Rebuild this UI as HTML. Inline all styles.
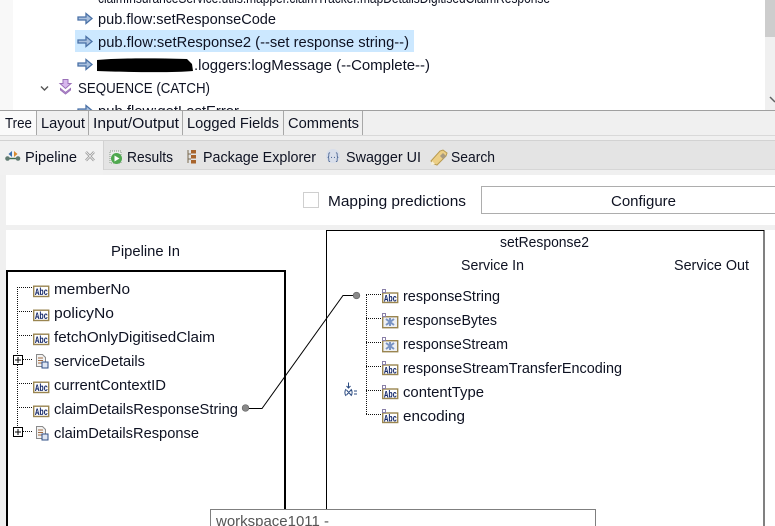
<!DOCTYPE html>
<html><head><meta charset="utf-8"><title>Pipeline</title>
<style>
html,body{margin:0;padding:0;background:#fff;width:775px;height:526px;overflow:hidden}
svg{display:block;position:absolute;left:0;top:0}
text{font-family:"Liberation Sans",sans-serif;font-size:15px;fill:#0e1222}
.a{font-family:"Liberation Mono",monospace;font-size:10.5px;font-weight:bold;fill:#16296a}
.d{stroke:#111;stroke-width:1;stroke-dasharray:1 1;fill:none}
.ab{fill:#fff;stroke:#9a8550;stroke-width:1.4}
.sq{fill:#fff;stroke:#8a80a8;stroke-width:1}
</style></head><body>
<svg width="775" height="526" viewBox="0 0 775 526" xmlns="http://www.w3.org/2000/svg">
<rect width="775" height="526" fill="#fff"/>
<!-- top tree -->
<rect x="0" y="0" width="13" height="110" fill="#f8f8f8"/>
<rect x="75" y="30" width="339" height="22" fill="#cce8ff"/>
<text x="98" y="3" textLength="452" lengthAdjust="spacingAndGlyphs">claimInsuranceService.utils.mapper.claimTracker.mapDetailsDigitisedClaimResponse</text>
<path d="M78 17h8v-3.500l6 5-6 5v-3.500h-8z" fill="#a9c0de" stroke="#4a71a6" stroke-width="1.300"/>
<text x="98" y="24" textLength="178" lengthAdjust="spacingAndGlyphs">pub.flow:setResponseCode</text>
<path d="M78 40h8v-3.500l6 5-6 5v-3.500h-8z" fill="#a9c0de" stroke="#4a71a6" stroke-width="1.300"/>
<text x="98" y="47" textLength="311" lengthAdjust="spacingAndGlyphs">pub.flow:setResponse2 (--set response string--)</text>
<path d="M78 63h8v-3.500l6 5-6 5v-3.500h-8z" fill="#a9c0de" stroke="#4a71a6" stroke-width="1.300"/>
<path d="M97 60c20-2 55-2 90-1l5 5 1 7c-20 2-70 1-96 0z" fill="#000"/>
<text x="194" y="70" textLength="236" lengthAdjust="spacingAndGlyphs">.loggers:logMessage (--Complete--)</text>
<path d="M41 86.500l3.500 3.500 3.500-3.500" fill="none" stroke="#555" stroke-width="1.400"/>
<path d="M63 79.500h5v4h3l-5.500 5-5.500-5h3zM60.500 88.500l5 4 5-4v1.500l-5 4-5-4z" fill="#d8b8ee" stroke="#9a70b8" stroke-width="1"/>
<text x="78" y="93" textLength="132" lengthAdjust="spacingAndGlyphs">SEQUENCE (CATCH)</text>
<path d="M78 109h8v-3.500l6 5-6 5v-3.500h-8z" fill="#a9c0de" stroke="#4a71a6" stroke-width="1.300"/>
<text x="98" y="116" textLength="141" lengthAdjust="spacingAndGlyphs">pub.flow:getLastError</text>
<!-- scrollbar -->
<rect x="765" y="0" width="10" height="110" fill="#f0f0f0"/>
<rect x="765" y="0" width="10" height="37" fill="#cdcdcd"/>
<path d="M770 97l5 5" stroke="#606060" stroke-width="1.500" fill="none"/>
<!-- editor tabs -->
<rect x="0" y="110" width="775" height="25" fill="#f0f0f0"/>
<rect x="0" y="110" width="775" height="1" fill="#a0a0a0"/>
<rect x="0" y="135" width="775" height="1" fill="#d9d9d9"/>
<rect x="0" y="136" width="775" height="4" fill="#f0f0f0"/>
<rect x="0" y="111" width="36" height="24" fill="#fafafa"/>
<rect x="36" y="111" width="1" height="24" fill="#a8a8a8"/>
<rect x="88" y="111" width="1" height="24" fill="#a8a8a8"/>
<rect x="182" y="111" width="1" height="24" fill="#a8a8a8"/>
<rect x="283" y="111" width="1" height="24" fill="#a8a8a8"/>
<rect x="362" y="111" width="1" height="24" fill="#a8a8a8"/>
<text x="5" y="128" textLength="27" lengthAdjust="spacingAndGlyphs">Tree</text>
<text x="41" y="128" textLength="44" lengthAdjust="spacingAndGlyphs">Layout</text>
<text x="93" y="128" textLength="86" lengthAdjust="spacingAndGlyphs">Input/Output</text>
<text x="187" y="128" textLength="92" lengthAdjust="spacingAndGlyphs">Logged Fields</text>
<text x="288" y="128" textLength="71" lengthAdjust="spacingAndGlyphs">Comments</text>
<!-- view tabs -->
<rect x="0" y="140" width="775" height="1" fill="#d2d2d2"/>
<rect x="0" y="141" width="775" height="28" fill="#e4e4e4"/>
<rect x="0" y="169" width="775" height="1" fill="#d6d6d6"/>
<rect x="0" y="170" width="775" height="60" fill="#f0f0f0"/>
<rect x="0" y="230" width="6" height="296" fill="#f0f0f0"/>
<rect x="0" y="141" width="103" height="34" fill="#f1f1f1"/>
<rect x="103" y="141" width="1" height="29" fill="#d2d2d2"/>
<path d="M7 158.500h11" stroke="#3c6a50" stroke-width="1.400" fill="none"/>
<circle cx="7.500" cy="158.500" r="2.300" fill="#607a70"/><circle cx="18" cy="158.500" r="2.300" fill="#607a70"/>
<path d="M12 151l-3.500 3 3.500 3z" fill="#3a70b0"/><path d="M14 151l3.500 3-3.500 3z" fill="#d98a30"/>
<text x="25" y="162" textLength="52" lengthAdjust="spacingAndGlyphs">Pipeline</text>
<path d="M86 152l8 8.500M94 152l-8 8.500" stroke="#999" stroke-width="2.400" fill="none"/>
<path d="M86 152l8 8.500M94 152l-8 8.500" stroke="#f4f4f4" stroke-width="0.900" fill="none"/>
<rect x="110" y="151" width="11" height="12" fill="#eee" stroke="#8a9a8a" stroke-dasharray="1 1"/>
<circle cx="116.500" cy="158.500" r="5.500" fill="#4fa84f"/>
<path d="M114.500 155.500l5 3-5 3z" fill="#fff"/>
<text x="127" y="162" textLength="46" lengthAdjust="spacingAndGlyphs">Results</text>
<path d="M188 150v13" stroke="#7a6a50" stroke-width="1"/>
<rect x="191" y="150" width="5" height="3.500" fill="#a8642c"/><rect x="191" y="155" width="5" height="3.500" fill="#a8642c"/><rect x="191" y="160" width="5" height="3.500" fill="#a8642c"/>
<path d="M188 154h3M188 159h3" stroke="#7a6a50" stroke-width="1"/>
<text x="203" y="162" textLength="113" lengthAdjust="spacingAndGlyphs">Package Explorer</text>
<circle cx="333" cy="156" r="7" fill="#d8deea"/>
<text x="327.500" y="160" style="font-size:10px;fill:#2a4a80" textLength="11" lengthAdjust="spacingAndGlyphs">{··}</text>
<text x="346" y="162" textLength="75" lengthAdjust="spacingAndGlyphs">Swagger UI</text>
<path d="M434 164l-3-3 9-10 3-1 4 3-1 3-9 9z" fill="#eccf86" stroke="#b89a50" stroke-width="1"/>
<path d="M440 156l3 3 3-3-3-3z" fill="#a89a80"/>
<path d="M431 165l1-4 3 3z" fill="#f8f0d4"/>
<text x="451" y="162" textLength="44" lengthAdjust="spacingAndGlyphs">Search</text>
<!-- mapping bar -->
<rect x="6" y="175" width="769" height="50" fill="#fff"/>
<rect x="303.500" y="192.500" width="15" height="15" fill="#fff" stroke="#cfcfcf"/>
<text x="328" y="206" textLength="138" lengthAdjust="spacingAndGlyphs">Mapping predictions</text>
<rect x="481.500" y="186.500" width="300" height="27" fill="#fff" stroke="#adadad"/>
<text x="611" y="206" textLength="65" lengthAdjust="spacingAndGlyphs">Configure</text>
<!-- panel -->
<text x="111" y="256" textLength="69" lengthAdjust="spacingAndGlyphs">Pipeline In</text>
<rect x="7" y="271" width="278" height="270" fill="none" stroke="#000" stroke-width="2"/>
<rect x="326.500" y="230.500" width="437.500" height="310" fill="none" stroke="#000"/>
<text x="500" y="247" textLength="89" lengthAdjust="spacingAndGlyphs">setResponse2</text>
<text x="461" y="270" textLength="63" lengthAdjust="spacingAndGlyphs">Service In</text>
<text x="674" y="270" textLength="75" lengthAdjust="spacingAndGlyphs">Service Out</text>
<!-- left tree -->
<path class="d" d="M17.500 287V429M17 287.500h16M17 311.500h16M17 335.500h16M17 359.500h16M17 383.500h16M17 407.500h16M17 431.500h16"/>
<rect x="33.700" y="286.200" width="15" height="10.300" class="ab"/><text class="a" x="35" y="295" textLength="13" lengthAdjust="spacingAndGlyphs">Abc</text>
<rect x="33.700" y="310.200" width="15" height="10.300" class="ab"/><text class="a" x="35" y="319" textLength="13" lengthAdjust="spacingAndGlyphs">Abc</text>
<rect x="33.700" y="334.200" width="15" height="10.300" class="ab"/><text class="a" x="35" y="343" textLength="13" lengthAdjust="spacingAndGlyphs">Abc</text>
<rect x="33.700" y="382.200" width="15" height="10.300" class="ab"/><text class="a" x="35" y="391" textLength="13" lengthAdjust="spacingAndGlyphs">Abc</text>
<rect x="33.700" y="406.200" width="15" height="10.300" class="ab"/><text class="a" x="35" y="415" textLength="13" lengthAdjust="spacingAndGlyphs">Abc</text>
<rect x="13.500" y="355.500" width="9" height="9" fill="#fff" stroke="#000"/><path d="M15 360h6M18 357v6" stroke="#000"/>
<rect x="13.500" y="427.500" width="9" height="9" fill="#fff" stroke="#000"/><path d="M15 432h6M18 429v6" stroke="#000"/>
<path d="M36.500 354.500h6l3 3v9h-9z" fill="#f2f2f2" stroke="#8a8a8a"/><path d="M38 358h5M38 360.500h5M38 363h4" stroke="#a06a40"/><rect x="42" y="362" width="6" height="6" fill="#dfe6f2" stroke="#2f4f86"/>
<path d="M36.500 426.500h6l3 3v9h-9z" fill="#f2f2f2" stroke="#8a8a8a"/><path d="M38 430h5M38 432.500h5M38 435h4" stroke="#a06a40"/><rect x="42" y="434" width="6" height="6" fill="#dfe6f2" stroke="#2f4f86"/>
<text x="54" y="294" textLength="76" lengthAdjust="spacingAndGlyphs">memberNo</text>
<text x="54" y="318" textLength="60" lengthAdjust="spacingAndGlyphs">policyNo</text>
<text x="54" y="342" textLength="161" lengthAdjust="spacingAndGlyphs">fetchOnlyDigitisedClaim</text>
<text x="54" y="366" textLength="91" lengthAdjust="spacingAndGlyphs">serviceDetails</text>
<text x="54" y="390" textLength="112" lengthAdjust="spacingAndGlyphs">currentContextID</text>
<text x="54" y="414" textLength="184" lengthAdjust="spacingAndGlyphs">claimDetailsResponseString</text>
<text x="54" y="438" textLength="145" lengthAdjust="spacingAndGlyphs">claimDetailsResponse</text>
<!-- connection -->
<path d="M249 408.500h13L343 295.500h10" fill="none" stroke="#000"/>
<circle cx="245.500" cy="408" r="3.300" fill="#8a8a8a" stroke="#666" stroke-width=".7"/>
<circle cx="356.500" cy="295.500" r="3.300" fill="#8a8a8a" stroke="#666" stroke-width=".7"/>
<!-- right tree -->
<path class="d" d="M366.500 295V415M366 294.500h16M366 318.500h16M366 342.500h16M366 366.500h16M366 390.500h16M366 414.500h16"/>
<rect x="382.700" y="293" width="15" height="9.500" class="ab"/><rect x="382.500" y="289.500" width="3" height="3" class="sq"/><text class="a" x="384" y="301.500" textLength="13" lengthAdjust="spacingAndGlyphs">Abc</text>
<rect x="382.700" y="316.700" width="15" height="11" fill="#eef0f4" stroke="#9a8550" stroke-width="1.400"/><rect x="382.500" y="313.500" width="3" height="3" class="sq"/><path d="M386 319l8 6M394 319l-8 6M390 318v8" stroke="#7a94c4" stroke-width="2"/>
<rect x="382.700" y="340.700" width="15" height="11" fill="#eef0f4" stroke="#9a8550" stroke-width="1.400"/><rect x="382.500" y="337.500" width="3" height="3" class="sq"/><path d="M386 343l8 6M394 343l-8 6M390 342v8" stroke="#7a94c4" stroke-width="2"/>
<rect x="382.700" y="365" width="15" height="9.500" class="ab"/><rect x="382.500" y="361.500" width="3" height="3" class="sq"/><text class="a" x="384" y="373.500" textLength="13" lengthAdjust="spacingAndGlyphs">Abc</text>
<rect x="382.700" y="389" width="15" height="9.500" class="ab"/><rect x="382.500" y="385.500" width="3" height="3" class="sq"/><text class="a" x="384" y="397.500" textLength="13" lengthAdjust="spacingAndGlyphs">Abc</text>
<rect x="382.700" y="413" width="15" height="9.500" class="ab"/><rect x="382.500" y="409.500" width="3" height="3" class="sq"/><text class="a" x="384" y="421.500" textLength="13" lengthAdjust="spacingAndGlyphs">Abc</text>
<path d="M348.500 382.500v5M346.500 386l2 2 2-2" fill="none" stroke="#2a4a80"/>
<path d="M346 389c-1.500 2-1.500 5 0 7M351 389c1.500 2 1.500 5 0 7M346.500 390l4.500 5M351 390l-4.500 5M354 391h3M354 394h3" fill="none" stroke="#2a4a80" stroke-width="1"/>
<text x="403" y="301" textLength="97" lengthAdjust="spacingAndGlyphs">responseString</text>
<text x="403" y="325" textLength="94" lengthAdjust="spacingAndGlyphs">responseBytes</text>
<text x="403" y="349" textLength="105" lengthAdjust="spacingAndGlyphs">responseStream</text>
<text x="403" y="373" textLength="219" lengthAdjust="spacingAndGlyphs">responseStreamTransferEncoding</text>
<text x="403" y="397" textLength="81" lengthAdjust="spacingAndGlyphs">contentType</text>
<text x="403" y="421" textLength="62" lengthAdjust="spacingAndGlyphs">encoding</text>
<!-- popup -->
<rect x="210.500" y="509.500" width="385" height="30" fill="#fff" stroke="#7f7f7f"/>
<text x="216" y="526" textLength="113" lengthAdjust="spacingAndGlyphs" style="fill:#555">workspace1011 -</text>
</svg>
</body></html>
